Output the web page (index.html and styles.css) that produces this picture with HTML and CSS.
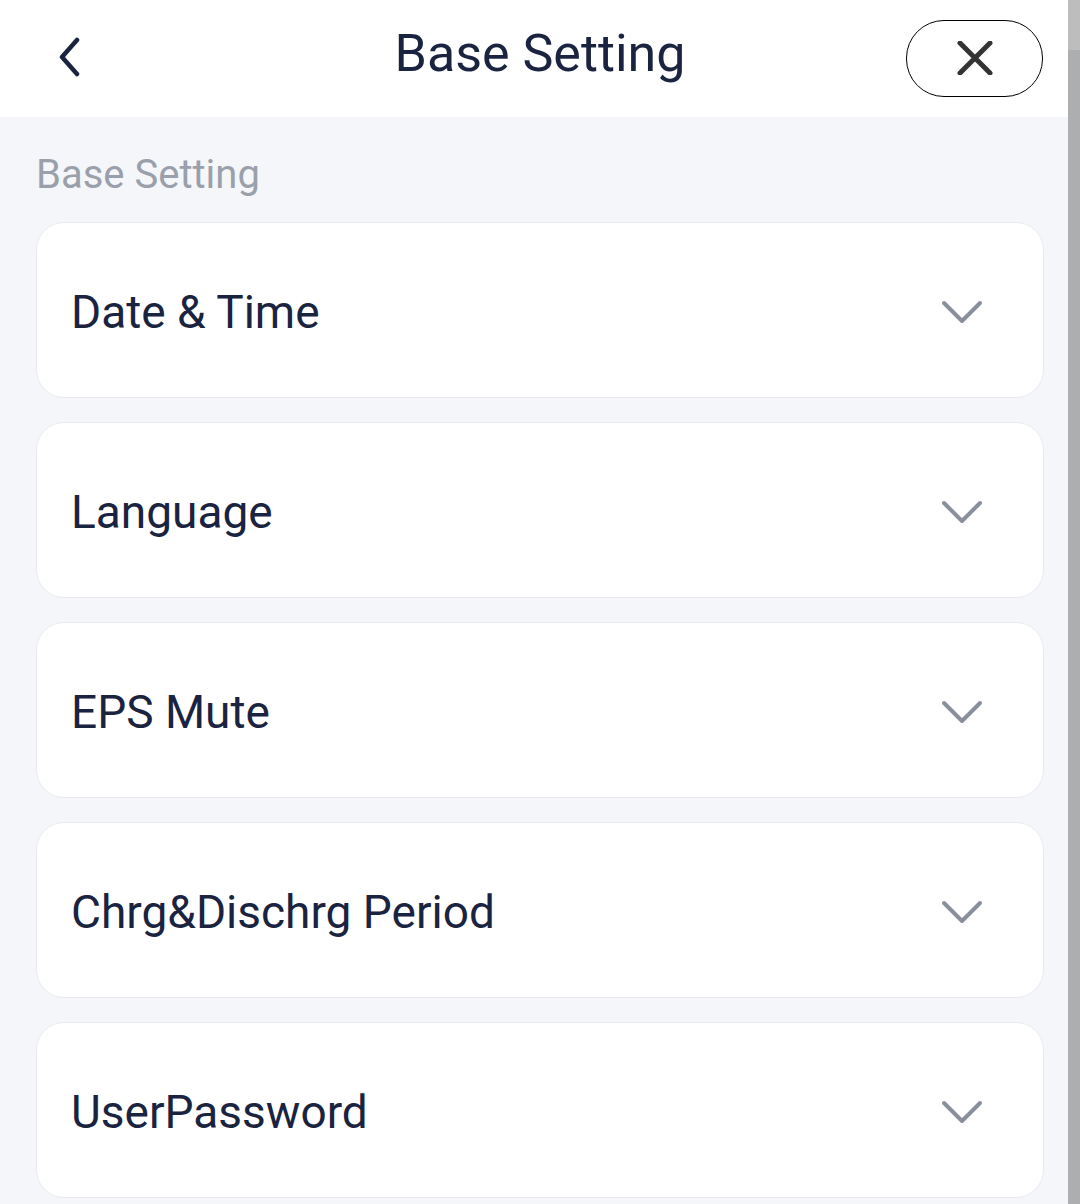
FILE: index.html
```html
<!DOCTYPE html>
<html lang="en">
<head>
    <meta charset="UTF-8">
    <meta name="viewport" content="width=device-width, initial-scale=1.0">
    <title>Base Setting</title>
    <link rel="stylesheet" href="styles.css">
</head>
<body>
    <div class="page">
        <div class="main">
            <div class="topbar">
                <div class="back">
                    <svg width="30" height="40" viewBox="0 0 30 40"><path d="M22 3 L7 20 L22 37" fill="none" stroke="#1a2340" stroke-width="4.5" stroke-linecap="round" stroke-linejoin="round"/></svg>
                </div>
                <span class="title">Base Setting</span>
                <div class="close">
                    <svg width="36" height="34" viewBox="0 0 36 34"><path d="M3 2 L33 32 M33 2 L3 32" fill="none" stroke="#333333" stroke-width="5" stroke-linecap="round"/></svg>
                </div>
            </div>

            <div class="content">
                <p class="section">Base Setting</p>
                <div class="list">
                    <div class="item"><span class="name">Date &amp; Time</span><span class="arrow"></span></div>
                    <div class="item"><span class="name">Language</span><span class="arrow"></span></div>
                    <div class="item"><span class="name">EPS Mute</span><span class="arrow"></span></div>
                    <div class="item"><span class="name">Chrg&amp;Dischrg Period</span><span class="arrow"></span></div>
                    <div class="item"><span class="name">UserPassword</span><span class="arrow"></span></div>
                </div>
            </div>
        </div>
        <div class="scrollbar"><div class="thumb"></div></div>
    </div>

    <script>
        const arrows = document.querySelectorAll('.arrow')
        arrows.forEach(function (a) {
            a.innerHTML = '<svg width="42" height="26" viewBox="0 0 42 26"><path d="M3 4 L21 22 L39 4" fill="none" stroke="#8a8f9c" stroke-width="4" stroke-linecap="round" stroke-linejoin="round"/></svg>'
        })
    </script>
</body>
</html>
```

FILE: styles.css
```css
*{
    padding: 0px;
    margin: 0px;
    box-sizing: border-box;
    font-family: "Roboto", "Noto Sans", sans-serif;
}
body{
    background-color: #f5f6fa;
    overflow: hidden;
}
.page{
    display: flex;
    height: 1204px;
}
.main{
    width: 1068px;
    display: flex;
    flex-direction: column;
}
.topbar{
    height: 117px;
    background-color: white;
    display: flex;
    align-items: center;
    justify-content: space-between;
    padding: 0px 25px 0px 55px;
    position: relative;
}
.back{
    display: flex;
    align-items: center;
    margin-top: -4px;
}
.title{
    position: absolute;
    left: 0;
    width: 1080px;
    top: 23px;
    text-align: center;
    font-size: 52px;
    color: #1a2340;
    pointer-events: none;
}
.close{
    width: 137px;
    height: 77px;
    border: 1.5px solid black;
    border-radius: 38px / 38px;
    display: flex;
    align-items: center;
    justify-content: center;
    margin-top: -1px;
}
.content{
    padding: 0px 24px 0px 36px;
}
.section{
    color: #9aa0ab;
    font-size: 40px;
    margin-top: 35px;
    line-height: 46px;
}
.list{
    display: flex;
    flex-direction: column;
    gap: 24px;
    margin-top: 24px;
}
.item{
    height: 176px;
    background-color: white;
    border: 1px solid #e8eaee;
    border-radius: 28px;
    display: flex;
    align-items: center;
    justify-content: space-between;
    padding: 4px 60px 0px 34px;
}
.name{
    font-size: 46px;
    color: #1a2340;
}
.arrow{
    display: flex;
    align-items: center;
    margin-top: 0px;
}
.scrollbar{
    width: 12px;
    background-color: #bdbdbd;
    display: flex;
    flex-direction: column;
}
.thumb{
    margin-top: 50px;
    flex: 1;
    background-color: #adaeb0;
}
```
